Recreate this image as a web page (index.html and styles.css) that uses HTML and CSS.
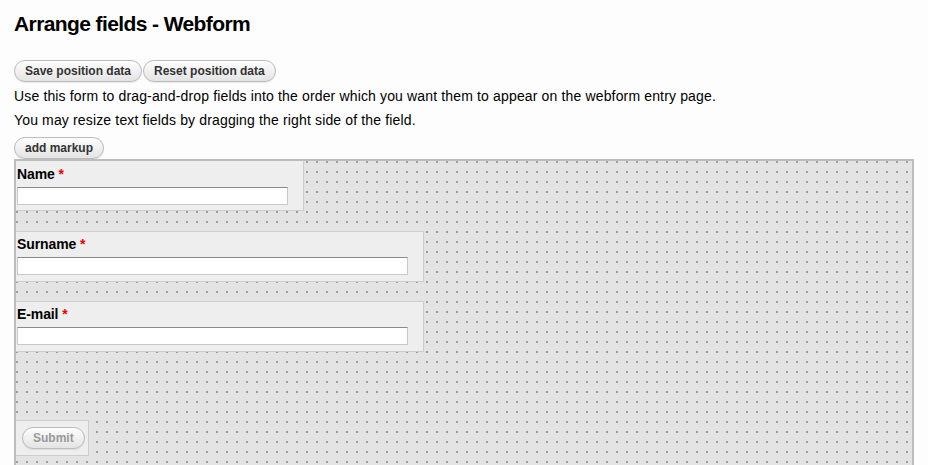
FILE: index.html
```html
<!DOCTYPE html>
<html>
<head>
<meta charset="utf-8">
<link rel="stylesheet" href="styles.css">
</head>
<body>
<h1 class="title">Arrange fields - Webform</h1>
<div class="actions">
  <button class="btn">Save position data</button><button class="btn">Reset position data</button>
</div>
<p class="help help-first">Use this form to drag-and-drop fields into the order which you want them to appear on the webform entry page.</p>
<p class="help help-last">You may resize text fields by dragging the right side of the field.</p>
<div class="actions">
  <button class="btn">add markup</button>
</div>
<div class="canvas">
  <div class="field field-name">
    <label class="label">Name <span class="req">*</span></label>
    <div class="input input-short"></div>
  </div>
  <div class="field field-surname">
    <label class="label">Surname <span class="req">*</span></label>
    <div class="input input-long"></div>
  </div>
  <div class="field field-email">
    <label class="label">E-mail <span class="req">*</span></label>
    <div class="input input-long"></div>
  </div>
  <div class="submit-box">
    <button class="btn btn-disabled">Submit</button>
  </div>
</div>
</body>
</html>
```

FILE: styles.css
```css
html, body {
  margin: 0;
  padding: 0;
  background: #fdfdfd;
}
body {
  padding: 0 14px;
  font-family: "Liberation Sans", Arial, sans-serif;
  color: #000;
  font-size: 13px;
  overflow: hidden;
}
.title {
  margin: 0;
  padding-top: 10px;
  height: 50px;
  font-size: 21px;
  line-height: 27px;
  font-weight: bold;
  letter-spacing: -0.6px;
}
.actions {
  display: flex;
  gap: 1px;
}
.btn {
  font-family: "Liberation Sans", Arial, sans-serif;
  font-weight: bold;
  font-size: 12px;
  color: #333;
  height: 22px;
  padding: 0 10px;
  border: 1px solid #bbb;
  border-radius: 11px;
  background: linear-gradient(#fdfdfd, #e4e4e4);
  box-shadow: 0 1px 1px rgba(0,0,0,0.08);
  line-height: 20px;
  margin: 0;
}
.help {
  margin: 0;
  font-size: 14px;
  line-height: 24px;
  letter-spacing: 0.15px;
}
.help-first {
  margin-top: 2px;
}
.help-last {
  margin-bottom: 5px;
}
.canvas {
  position: relative;
  height: 320px;
  width: 896px;
  border: 2px solid #bdbdbd;
  border-bottom: none;
  background-color: #e4e4e4;
  background-image:
    linear-gradient(to right, transparent 2px, #e4e4e4 2px),
    linear-gradient(to bottom, #9d9d9d 2px, #e4e4e4 2px);
  background-size: 10px 10px;
}
.field {
  position: absolute;
  left: 0;
  box-sizing: border-box;
  height: 51px;
  background: #eeeeee;
  border: 1px solid #cdcdcd;
  border-left: none;
  padding: 3px 0 0 1px;
}
.field-name { top: 0; width: 288px; border-top: none; padding-top: 4px; height: 50px; }
.field-surname { top: 70px; width: 408px; }
.field-email { top: 140px; width: 408px; }
.label {
  display: block;
  font-weight: bold;
  font-size: 14px;
  line-height: 18px;
  letter-spacing: -0.1px;
  height: 22px;
}
.req {
  color: #e00;
}
.input {
  box-sizing: border-box;
  height: 18px;
  background: #fff;
  border: 1px solid #c8c8c8;
  border-top-color: #8a8a8a;
}
.input-short { width: 271px; }
.input-long { width: 391px; }
.submit-box {
  position: absolute;
  left: 0;
  top: 259px;
  box-sizing: border-box;
  width: 73px;
  height: 36px;
  background: #eeeeee;
  border: 1px solid #cdcdcd;
  border-left: none;
  display: flex;
  align-items: center;
  padding-left: 6px;
}
.btn-disabled {
  color: #999;
  padding: 0 10px;
}
```
